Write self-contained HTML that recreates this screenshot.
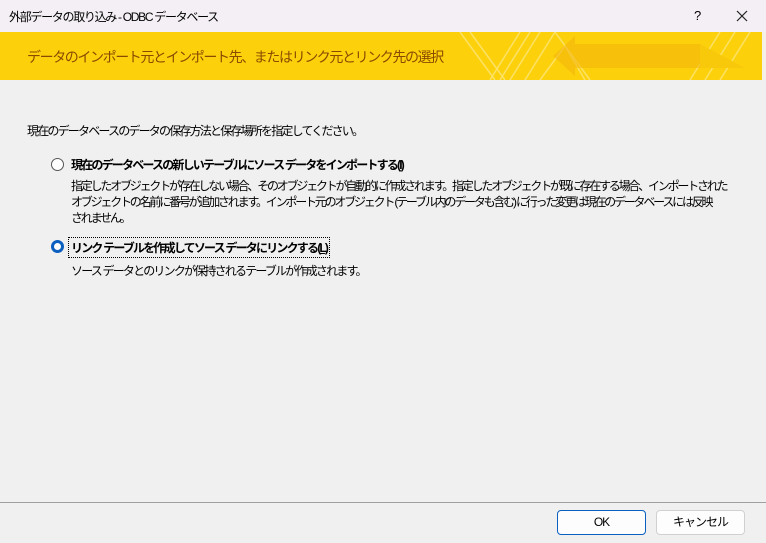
<!DOCTYPE html>
<html><head><meta charset="utf-8"><style>
body{margin:0;width:766px;height:543px;overflow:hidden;background:#f0f0f0;font-family:"Liberation Sans","Noto Sans CJK JP",sans-serif;font-size:12px;color:#000;position:relative;letter-spacing:-1.8px}
.t{position:absolute;white-space:nowrap}
#title{position:absolute;left:0;top:0;width:766px;height:32px;background:#f3eff4}
#banner{position:absolute;left:0;top:32px;width:762px;height:48px;background:#fcd10c;overflow:hidden}
#sep{position:absolute;left:0;top:502px;width:766px;height:1px;background:#a0a0a0}
.btn{position:absolute;top:510px;height:23px;width:87px;background:#fdfdfd;border:1px solid #d0d0d0;border-radius:4px;text-align:center;line-height:23px;font-size:12px;letter-spacing:-1px}
.radio{position:absolute;width:11px;height:11px;border:1px solid #555;border-radius:50%;background:#fff}
</style></head><body>
<div id="title"></div>
<div class="t" style="left:9px;top:8px;letter-spacing:-1.3px">外部データの取り込み - ODBC データベース</div>
<div class="t" style="left:694px;top:8px;font-size:13px;letter-spacing:0">?</div>
<svg style="position:absolute;left:736px;top:10px" width="12" height="12"><path d="M1 1L11 11M11 1L1 11" stroke="#222" stroke-width="1.2"/></svg>
<div id="banner">
<svg width="762" height="48" style="position:absolute;left:0;top:0">
<g stroke="#fde88a" stroke-width="1.5" fill="none" opacity=".7">
<path d="M490 48 L520 0 M500 48 L530 0 M510 48 L540 0"/>
<path d="M525 48 L555 0 L590 48 M540 48 L565 14 L585 48"/>
<path d="M460 0 L495 48 M470 0 L505 48"/>
<path d="M690 48 L720 0 M705 48 L735 0 M720 48 L750 0"/>
</g>
<path d="M553 24 L575 4 L575 12 L700 12 L700 36 L575 36 L575 44 Z" fill="#f3b20a" opacity=".55"/>
<path d="M700 12 L745 36 L700 36 Z" fill="#f8c80a"/>
</svg>
</div>
<div style="position:absolute;left:762px;top:32px;width:4px;height:48px;background:#f4f0e8"></div>
<div class="t" style="left:27px;top:47px;font-size:14px;color:#8a4a00;letter-spacing:-1.4px">データのインポート元とインポート先、またはリンク元とリンク先の選択</div>
<div class="t" style="left:27px;top:122px">現在のデータベースのデータの保存方法と保存場所を指定してください。</div>
<div class="radio" style="left:51px;top:158px"></div>
<div class="t" style="left:71px;top:156px;font-weight:bold">現在のデータベースの新しいテーブルにソース データをインポートする(<u>I</u>)</div>
<div class="t" style="left:71px;top:178px;line-height:16px;letter-spacing:-2.2px">指定したオブジェクトが存在しない場合、そのオブジェクトが自動的に作成されます。指定したオブジェクトが既に存在する場合、インポートされた<br>オブジェクトの名前に番号が追加されます。インポート元のオブジェクト (テーブル内のデータも含む) に行った変更は現在のデータベースには反映<br>されません。</div>
<div class="radio" style="left:51px;top:240px;width:7px;height:7px;border:3px solid #0a5fbf;background:#fff"></div>
<div class="t" style="left:69px;top:238px;font-weight:bold;outline:1px dotted #000;padding:1px 2px">リンク テーブルを作成してソース データにリンクする(<u>L</u>)</div>
<div class="t" style="left:71px;top:262px">ソース データとのリンクが保持されるテーブルが作成されます。</div>
<div id="sep"></div>
<div class="btn" style="left:557px;border:1px solid #0a5fbf">OK</div>
<div class="btn" style="left:656px">キャンセル</div>
</body></html>
